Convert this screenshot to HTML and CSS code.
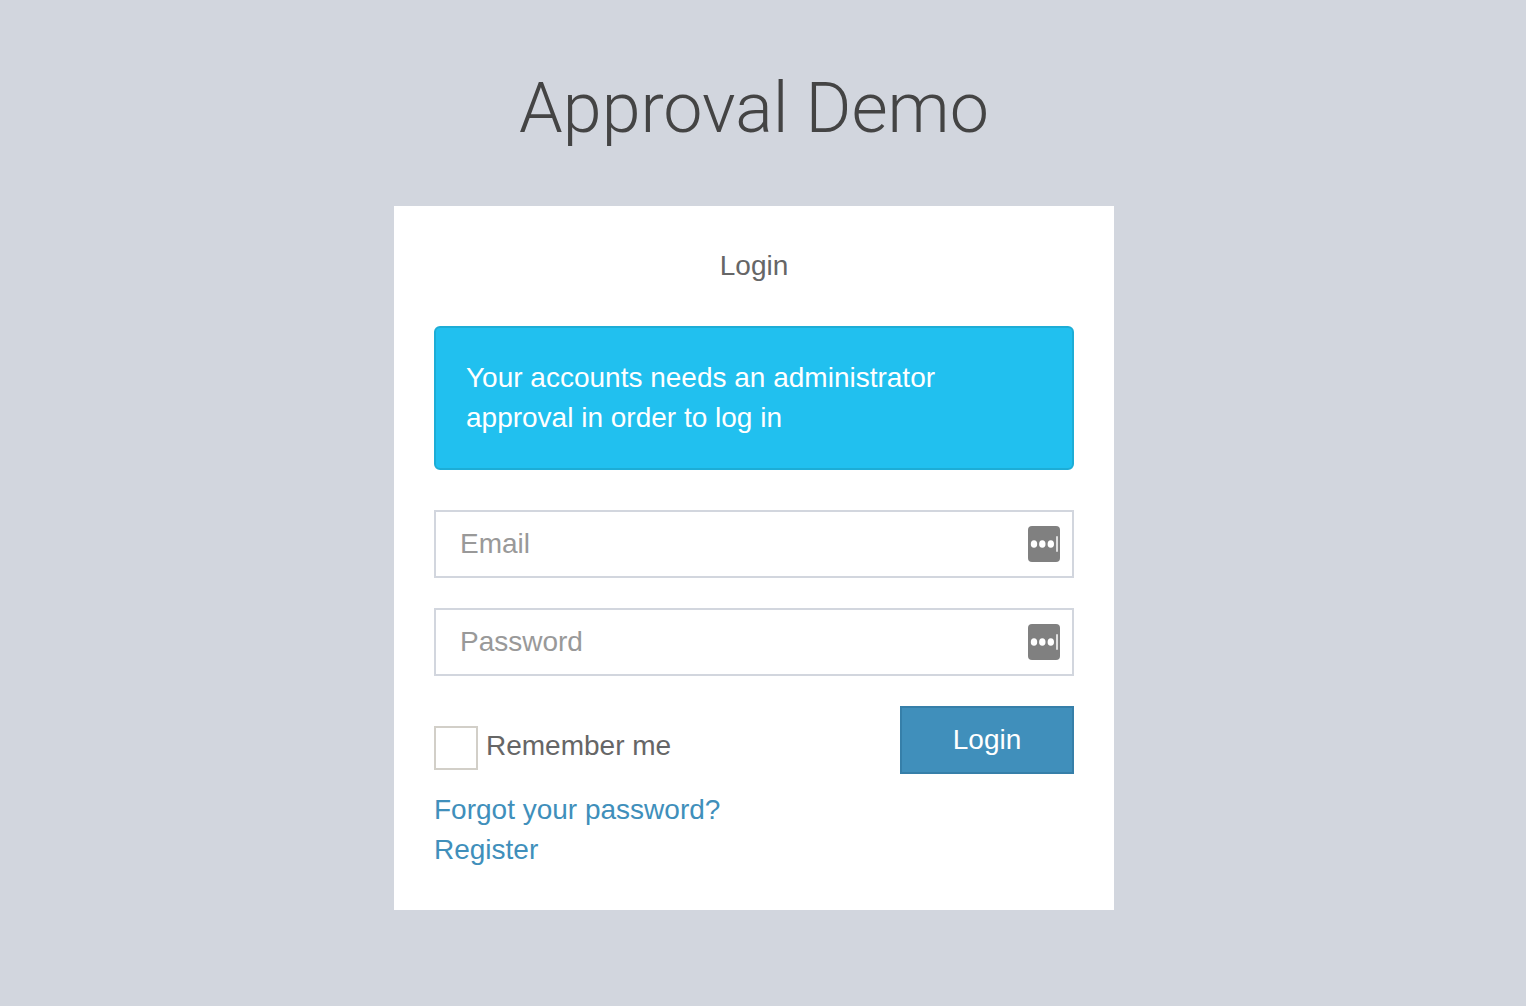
FILE: index.html
```html
<!DOCTYPE html>
<html lang="en">
<head>
    <meta charset="UTF-8">
    <meta name="viewport" content="width=device-width, initial-scale=1.0">
    <title>Approval Demo</title>
    <link rel="stylesheet" href="styles.css">
</head>
<body>
    <main class="login-box">
        <h1 class="login-logo">Approval Demo</h1>

        <div class="login-box-body">
            <p class="login-box-msg">Login</p>

            <div class="alert" role="alert">
                Your accounts needs an administrator approval in order to log in
            </div>

            <form>
                <div class="form-group">
                    <input type="email" class="form-control" placeholder="Email" aria-label="Email">
                    <svg class="key-icon" viewBox="0 0 32 36" aria-hidden="true">
                        <rect width="32" height="36" rx="4" fill="#808080"/>
                        <g fill="#fff">
                            <ellipse cx="6" cy="18" rx="3.2" ry="3.8"/>
                            <ellipse cx="14.3" cy="18" rx="3.2" ry="3.8"/>
                            <ellipse cx="22.8" cy="18" rx="3.2" ry="3.8"/>
                            <rect x="28" y="10" width="2" height="16" rx="1" opacity="0.75"/>
                        </g>
                    </svg>
                </div>
                <div class="form-group">
                    <input type="password" class="form-control" placeholder="Password" aria-label="Password">
                    <svg class="key-icon" viewBox="0 0 32 36" aria-hidden="true">
                        <rect width="32" height="36" rx="4" fill="#808080"/>
                        <g fill="#fff">
                            <ellipse cx="6" cy="18" rx="3.2" ry="3.8"/>
                            <ellipse cx="14.3" cy="18" rx="3.2" ry="3.8"/>
                            <ellipse cx="22.8" cy="18" rx="3.2" ry="3.8"/>
                            <rect x="28" y="10" width="2" height="16" rx="1" opacity="0.75"/>
                        </g>
                    </svg>
                </div>
                <div class="form-actions">
                    <label class="remember">
                        <input type="checkbox" class="checkbox">
                        <span>Remember me</span>
                    </label>
                    <button type="submit" class="btn">Login</button>
                </div>
            </form>

            <nav class="links">
                <a href="#">Forgot your password?</a>
                <a href="#">Register</a>
            </nav>
        </div>
    </main>
</body>
</html>
```
FILE: styles.css
```css
* {
    box-sizing: border-box;
}

html {
    background-color: #d2d6de;
}

body {
    margin: 0;
    padding: 58px 18px 40px 0;
    font-family: "Liberation Sans", Arial, sans-serif;
    font-size: 28px;
    line-height: 40px;
    color: #666;
}

.login-box {
    max-width: 720px;
    margin: 0 auto;
}

.login-logo {
    margin: 0 0 48px;
    font-family: Roboto, sans-serif;
    font-size: 70px;
    font-weight: 300;
    line-height: 100px;
    text-align: center;
    color: #444;
}

.login-box-body {
    padding: 40px;
    background-color: #fff;
}

.login-box-msg {
    margin: 0 0 40px;
    text-align: center;
}

.alert {
    margin-bottom: 40px;
    padding: 30px;
    border: 2px solid #1dadd6;
    border-radius: 6px;
    background-color: #21c0ef;
    color: #fff;
}

.form-group {
    position: relative;
    margin-bottom: 30px;
}

.form-control {
    display: block;
    width: 100%;
    height: 68px;
    padding: 12px 60px 12px 24px;
    border: 2px solid #d2d6de;
    border-radius: 0;
    background-color: #fff;
    font: inherit;
    color: #555;
}

.form-control::placeholder {
    color: #999;
    opacity: 1;
}

/* password manager icon inside the field */
.key-icon {
    position: absolute;
    top: 16px;
    right: 14px;
    width: 32px;
    height: 36px;
}

.form-actions {
    display: flex;
    justify-content: space-between;
    align-items: flex-start;
    margin-bottom: 16px;
}

.remember {
    display: flex;
    gap: 8px;
    margin-top: 20px;
    height: 44px;
}

.checkbox {
    appearance: none;
    width: 44px;
    height: 44px;
    margin: 0;
    border: 2px solid #d2cfc8;
    background-color: #fff;
}

.checkbox:checked {
    background-color: #3c8dbc;
}

.btn {
    width: 174px;
    height: 68px;
    padding: 0;
    border: 2px solid #367fa9;
    background-color: #408fbb;
    font: inherit;
    color: #fff;
    cursor: pointer;
}

.links {
    display: flex;
    flex-direction: column;
    align-items: flex-start;
}

.links a {
    color: #408fbb;
    text-decoration: none;
}
```
